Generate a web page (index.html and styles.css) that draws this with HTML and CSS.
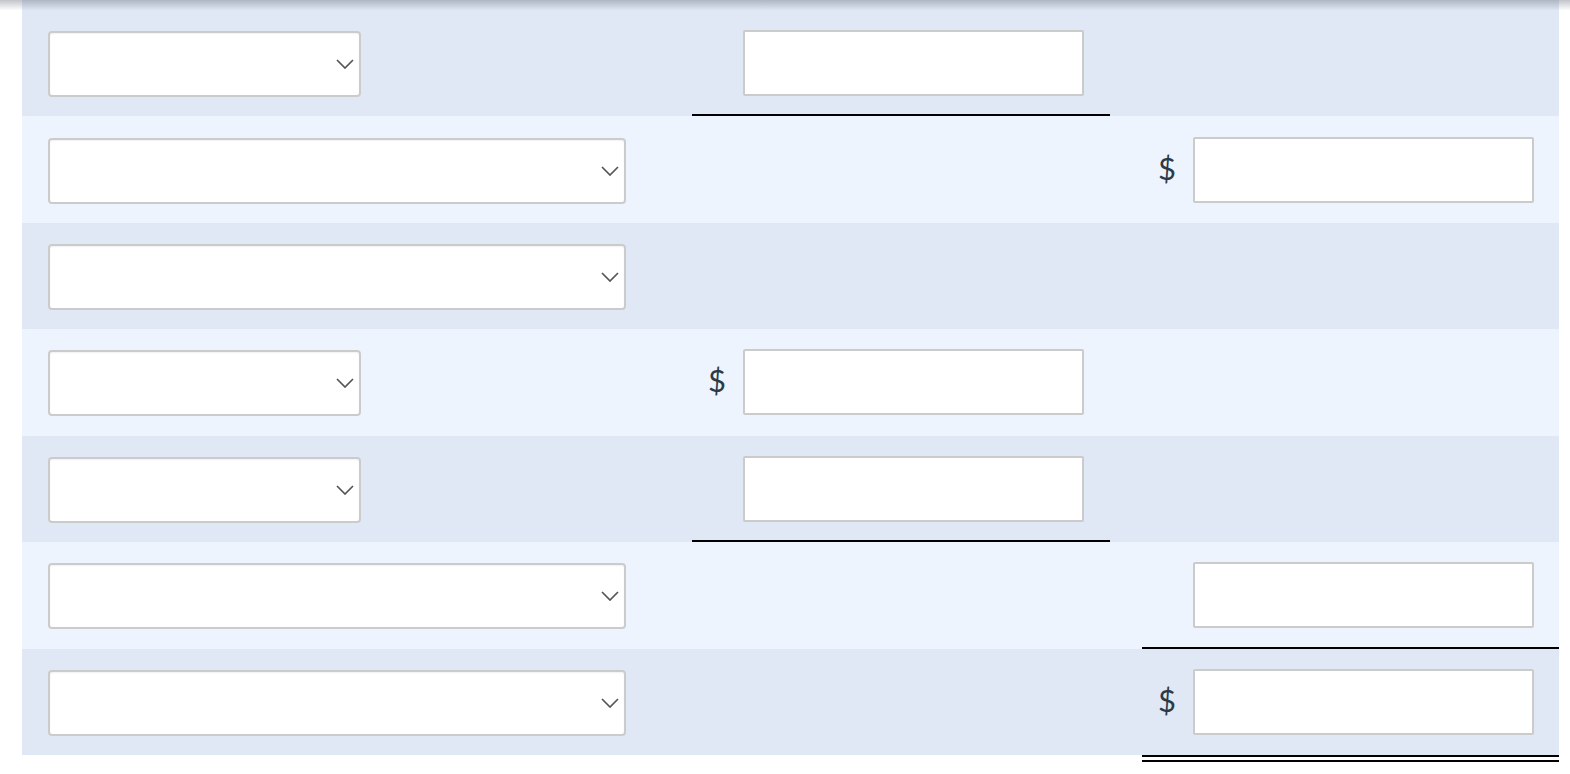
FILE: index.html
```html
<!DOCTYPE html>
<html lang="en">
    <head>
        <title>Statement worksheet</title>
        <meta charset="utf-8">
        <meta name="viewport" content="width=device-width, initial-scale=1.0">
        <link rel="stylesheet" href="styles.css">
    </head>
    <body>
        <div class="topshade"></div>
        <div class="sheet">

            <div class="row dark">
                <div class="cell label">
                    <div class="pick short">
                        <select aria-label="Account 1"><option></option></select>
                        <svg width="18" height="10" viewBox="0 0 18 10"><path d="M1 1 L9 9 L17 1" fill="none" stroke="#555" stroke-width="1.7"/></svg>
                    </div>
                </div>
                <div class="cell amount mid subtotal"><span class="cur"></span><input type="text" aria-label="Amount 1"></div>
                <div class="gap"></div>
                <div class="cell amount"></div>
            </div>

            <div class="row light">
                <div class="cell label">
                    <div class="pick long">
                        <select aria-label="Account 2"><option></option></select>
                        <svg width="18" height="10" viewBox="0 0 18 10"><path d="M1 1 L9 9 L17 1" fill="none" stroke="#555" stroke-width="1.7"/></svg>
                    </div>
                </div>
                <div class="cell amount mid"></div>
                <div class="gap"></div>
                <div class="cell amount"><span class="cur">$</span><input type="text" aria-label="Amount 2"></div>
            </div>

            <div class="row dark">
                <div class="cell label">
                    <div class="pick long">
                        <select aria-label="Account 3"><option></option></select>
                        <svg width="18" height="10" viewBox="0 0 18 10"><path d="M1 1 L9 9 L17 1" fill="none" stroke="#555" stroke-width="1.7"/></svg>
                    </div>
                </div>
                <div class="cell amount mid"></div>
                <div class="gap"></div>
                <div class="cell amount"></div>
            </div>

            <div class="row light">
                <div class="cell label">
                    <div class="pick short">
                        <select aria-label="Account 4"><option></option></select>
                        <svg width="18" height="10" viewBox="0 0 18 10"><path d="M1 1 L9 9 L17 1" fill="none" stroke="#555" stroke-width="1.7"/></svg>
                    </div>
                </div>
                <div class="cell amount mid"><span class="cur">$</span><input type="text" aria-label="Amount 4"></div>
                <div class="gap"></div>
                <div class="cell amount"></div>
            </div>

            <div class="row dark">
                <div class="cell label">
                    <div class="pick short">
                        <select aria-label="Account 5"><option></option></select>
                        <svg width="18" height="10" viewBox="0 0 18 10"><path d="M1 1 L9 9 L17 1" fill="none" stroke="#555" stroke-width="1.7"/></svg>
                    </div>
                </div>
                <div class="cell amount mid subtotal"><span class="cur"></span><input type="text" aria-label="Amount 5"></div>
                <div class="gap"></div>
                <div class="cell amount"></div>
            </div>

            <div class="row light">
                <div class="cell label">
                    <div class="pick long">
                        <select aria-label="Account 6"><option></option></select>
                        <svg width="18" height="10" viewBox="0 0 18 10"><path d="M1 1 L9 9 L17 1" fill="none" stroke="#555" stroke-width="1.7"/></svg>
                    </div>
                </div>
                <div class="cell amount mid"></div>
                <div class="gap"></div>
                <div class="cell amount subtotal"><span class="cur"></span><input type="text" aria-label="Amount 6"></div>
            </div>

            <div class="row dark">
                <div class="cell label">
                    <div class="pick long">
                        <select aria-label="Account 7"><option></option></select>
                        <svg width="18" height="10" viewBox="0 0 18 10"><path d="M1 1 L9 9 L17 1" fill="none" stroke="#555" stroke-width="1.7"/></svg>
                    </div>
                </div>
                <div class="cell amount mid"></div>
                <div class="gap"></div>
                <div class="cell amount"><span class="cur">$</span><input type="text" aria-label="Amount 7"></div>
            </div>

            <div class="rule-row"><div class="total-rule"></div></div>
        </div>
    </body>
</html>
```

FILE: styles.css
```css
:root {
    --dark-row: #dfe8f4;
    --light-row: #eef4fd;
    --field-border: #cbcbcb;
    --ink: #2c3a48;
}
body {
    margin: 0;
    font-family: Lato, "Open Sans", sans-serif;
    background: #fff;
}
.topshade {
    height: 10px;
    background: linear-gradient(rgba(95, 100, 115, 0.38), rgba(95, 100, 115, 0.02)),
                linear-gradient(to right, #fff 22px, var(--dark-row) 22px, var(--dark-row) 1559px, #fff 1559px);
}
.sheet {
    margin-left: 22px;
    width: 1537px;
}
.row {
    display: flex;
    height: 106.43px;
}
.dark {
    background: var(--dark-row);
}
.light {
    background: var(--light-row);
}
.cell {
    display: flex;
    align-items: center;
    box-sizing: border-box;
    height: 100%;
}
.label {
    width: 670px;
    padding-left: 26px;
}
.amount {
    width: 417px;
    padding-left: 16px;
}
.mid {
    width: 418px;
}
.gap {
    width: 32px;
}
.subtotal {
    border-bottom: 2px solid #000;
    padding-top: 2px;
}
.cur {
    width: 35px;
    font-size: 31px;
    color: var(--ink);
    margin-top: -4px;
}
input {
    width: 341px;
    height: 66px;
    margin: 0;
    box-sizing: border-box;
    border: 2px solid var(--field-border);
    border-radius: 2px;
    background: #fff;
}
.pick {
    position: relative;
    height: 66px;
    margin-top: 2px;
}
.short {
    width: 313px;
}
.long {
    width: 578px;
}
.pick select {
    width: 100%;
    height: 100%;
    margin: 0;
    appearance: none;
    -webkit-appearance: none;
    border: 2px solid var(--field-border);
    border-radius: 4px;
    background: #fff;
    box-shadow: inset 0 1px 2px rgba(0, 0, 0, 0.06);
}
.pick svg {
    position: absolute;
    right: 7px;
    top: 50%;
    margin-top: -5px;
    pointer-events: none;
}
.rule-row {
    display: flex;
    padding-left: 1120px;
}
.total-rule {
    width: 417px;
    height: 3px;
    border-top: 2px solid #000;
    border-bottom: 2px solid #000;
}
```
